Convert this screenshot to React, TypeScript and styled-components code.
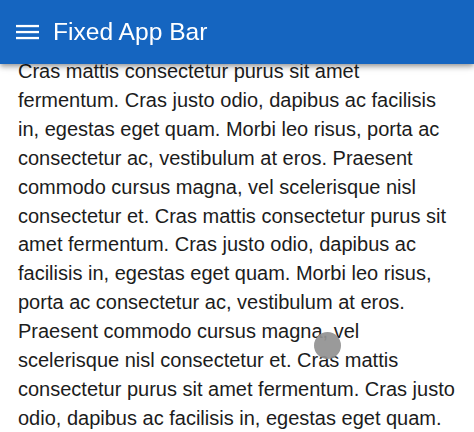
import React from "react";
import styled, { createGlobalStyle } from "styled-components";

const Global = createGlobalStyle`
  html, body { margin: 0; padding: 0; background: #fff; }
  body { font-family: "Liberation Sans", Arial, Helvetica, sans-serif; overflow: hidden; }
`;

const AppBar = styled.header`
  position: fixed;
  top: 0;
  left: 0;
  right: 0;
  height: 64px;
  background: #1565c0;
  color: #fff;
  display: flex;
  align-items: center;
  padding: 0 16px;
  gap: 14px;
  box-shadow: 0 2px 4px -1px rgba(0,0,0,0.25), 0 4px 5px 0 rgba(0,0,0,0.16), 0 1px 10px 0 rgba(0,0,0,0.12);
  z-index: 2;
`;

const MenuButton = styled.span`
  display: flex;
  width: 23px;
  height: 24px;
  align-items: center;
`;

const Title = styled.h1`
  margin: 0;
  font-size: 24.6px;
  font-weight: 400;
  letter-spacing: 0;
  line-height: 1;
`;

const Content = styled.main`
  padding: 57px 18px 0 18px;
`;

const Paragraph = styled.p`
  margin: 0;
  font-size: 20px;
  line-height: 28.9px;
  color: #1c1c1c;
`;

const Touch = styled.div`
  position: fixed;
  left: 314px;
  top: 332px;
  width: 27px;
  height: 27px;
  border-radius: 50%;
  background: rgba(145, 145, 145, 0.92);
  z-index: 3;
`;

const text =
  "Cras mattis consectetur purus sit amet fermentum. Cras justo odio, dapibus ac facilisis in, egestas eget quam. Morbi leo risus, porta ac consectetur ac, vestibulum at eros. Praesent commodo cursus magna, vel scelerisque nisl consectetur et. ";

export default function App() {
  return (
    <>
      <Global />
      <AppBar>
        <MenuButton>
          <svg width="23" height="24" viewBox="0 0 23 24">
            <rect x="0" y="4.9" width="23" height="2.3" fill="#fff" />
            <rect x="0" y="10.9" width="23" height="2.3" fill="#fff" />
            <rect x="0" y="16.9" width="23" height="2.3" fill="#fff" />
          </svg>
        </MenuButton>
        <Title>Fixed App Bar</Title>
      </AppBar>
      <Content>
        <Paragraph>{text.repeat(4)}</Paragraph>
      </Content>
      <Touch />
    </>
  );
}
